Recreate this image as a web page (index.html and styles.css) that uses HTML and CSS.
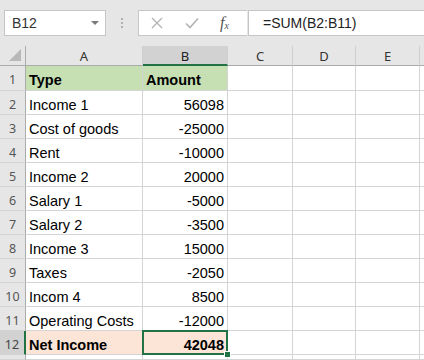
FILE: index.html
```html
<!DOCTYPE html>
<html lang="en">
<head>
    <meta charset="UTF-8">
    <title>Net Income</title>
    <link rel="stylesheet" href="styles.css">
</head>
<body>
    <!-- Barra de fórmulas -->
    <div class="toolbar">
        <div class="namebox">
            <span>B12</span>
            <span class="caret"></span>
        </div>
        <div class="grip"><i></i><i></i><i></i></div>
        <div class="fxbox">
            <svg class="btn" width="14" height="14" viewBox="0 0 14 14"><path d="M2 2L12 12M12 2L2 12" stroke="#b4b4b4" stroke-width="1.4" fill="none"/></svg>
            <svg class="btn" width="16" height="14" viewBox="0 0 16 14"><path d="M2 7.5L6 11.5L14 2.5" stroke="#b4b4b4" stroke-width="1.6" fill="none"/></svg>
            <span class="fx">f<sub>x</sub></span>
        </div>
        <div class="formula">=SUM(B2:B11)</div>
    </div>

    <!-- Hoja -->
    <div class="sheet">
        <div class="corner"><span class="tri"></span></div>
        <div class="colhead">A</div>
        <div class="colhead active">B</div>
        <div class="colhead">C</div>
        <div class="colhead">D</div>
        <div class="colhead">E</div>
        <div class="colhead last"></div>

        <div class="rowhead">1</div>
        <div class="cell head bold">Type</div>
        <div class="cell head bold">Amount</div>
        <div class="cell"></div><div class="cell"></div><div class="cell"></div><div class="cell last"></div>

        <div class="rowhead">2</div>
        <div class="cell">Income 1</div>
        <div class="cell num">56098</div>
        <div class="cell"></div><div class="cell"></div><div class="cell"></div><div class="cell last"></div>

        <div class="rowhead">3</div>
        <div class="cell">Cost of goods</div>
        <div class="cell num">-25000</div>
        <div class="cell"></div><div class="cell"></div><div class="cell"></div><div class="cell last"></div>

        <div class="rowhead">4</div>
        <div class="cell">Rent</div>
        <div class="cell num">-10000</div>
        <div class="cell"></div><div class="cell"></div><div class="cell"></div><div class="cell last"></div>

        <div class="rowhead">5</div>
        <div class="cell">Income 2</div>
        <div class="cell num">20000</div>
        <div class="cell"></div><div class="cell"></div><div class="cell"></div><div class="cell last"></div>

        <div class="rowhead">6</div>
        <div class="cell">Salary 1</div>
        <div class="cell num">-5000</div>
        <div class="cell"></div><div class="cell"></div><div class="cell"></div><div class="cell last"></div>

        <div class="rowhead">7</div>
        <div class="cell">Salary 2</div>
        <div class="cell num">-3500</div>
        <div class="cell"></div><div class="cell"></div><div class="cell"></div><div class="cell last"></div>

        <div class="rowhead">8</div>
        <div class="cell">Income 3</div>
        <div class="cell num">15000</div>
        <div class="cell"></div><div class="cell"></div><div class="cell"></div><div class="cell last"></div>

        <div class="rowhead">9</div>
        <div class="cell">Taxes</div>
        <div class="cell num">-2050</div>
        <div class="cell"></div><div class="cell"></div><div class="cell"></div><div class="cell last"></div>

        <div class="rowhead">10</div>
        <div class="cell">Incom 4</div>
        <div class="cell num">8500</div>
        <div class="cell"></div><div class="cell"></div><div class="cell"></div><div class="cell last"></div>

        <div class="rowhead">11</div>
        <div class="cell">Operating Costs</div>
        <div class="cell num">-12000</div>
        <div class="cell"></div><div class="cell"></div><div class="cell"></div><div class="cell last"></div>

        <div class="rowhead active">12</div>
        <div class="cell total bold">Net Income</div>
        <div class="cell total bold num selected">42048</div>
        <div class="cell"></div><div class="cell"></div><div class="cell"></div><div class="cell last"></div>

        <div class="rowhead"></div>
        <div class="cell"></div><div class="cell"></div><div class="cell"></div><div class="cell"></div><div class="cell"></div><div class="cell last"></div>
    </div>
</body>
</html>
```

FILE: styles.css
```css
body {
    margin: 0;
    padding: 0;
    font-family: "Liberation Sans", Arial, sans-serif;
    background-color: #fff;
    overflow: hidden;
}

/* Barra de fórmulas */
.toolbar {
    height: 46px;
    background-color: #e6e6e6;
    display: flex;
    align-items: flex-start;
    padding: 10px 0 0 4px;
    box-sizing: border-box;
}

.namebox {
    width: 102px;
    height: 26px;
    box-sizing: border-box;
    background-color: #fff;
    border: 1px solid #c6c6c6;
    display: flex;
    align-items: center;
    justify-content: space-between;
    padding: 0 6px 0 7px;
    font-size: 14px;
    color: #333;
}

.caret {
    width: 0;
    height: 0;
    border-left: 4px solid transparent;
    border-right: 4px solid transparent;
    border-top: 4px solid #7a7a7a;
}

.grip {
    width: 32px;
    height: 26px;
    display: flex;
    flex-direction: column;
    align-items: center;
    justify-content: center;
    gap: 2px;
}

.grip i {
    width: 2px;
    height: 2px;
    background-color: #b0b0b0;
}

.fxbox {
    width: 109px;
    height: 26px;
    box-sizing: border-box;
    background-color: #fff;
    border: 1px solid #c6c6c6;
    border-right: none;
    display: flex;
    align-items: center;
    padding-left: 11px;
}

.fxbox .btn {
    margin-right: 20px;
}

.fx {
    font-family: "Liberation Serif", serif;
    font-style: italic;
    font-size: 16px;
    color: #555;
    margin-left: 0;
}

.fx sub {
    font-size: 10px;
    vertical-align: -1px;
}

.formula {
    flex: 1;
    height: 26px;
    box-sizing: border-box;
    background-color: #fff;
    border: 1px solid #c6c6c6;
    border-right: none;
    margin-left: 1px;
    padding-left: 14px;
    font-size: 14px;
    line-height: 24px;
    color: #222;
}

/* Hoja */
.sheet {
    display: grid;
    grid-template-columns: 26px 117px 85px 65px 63px 64px 1fr;
    grid-template-rows: 20px 25px repeat(11, 24px) 5px;
    font-size: 14.5px;
    color: #000;
}

.corner {
    background-color: #e6e6e6;
    border-right: 1px solid #ababab;
    border-bottom: 1px solid #ababab;
    box-sizing: border-box;
    display: flex;
    align-items: flex-end;
    justify-content: flex-end;
    padding: 0 4px 4px 0;
}

.tri {
    width: 0;
    height: 0;
    border-left: 12px solid transparent;
    border-bottom: 12px solid #b8b8b8;
}

.colhead {
    background-color: #e6e6e6;
    border-right: 1px solid #cfcfcf;
    border-bottom: 1px solid #ababab;
    box-sizing: border-box;
    font-family: "Noto Sans", sans-serif;
    font-size: 13px;
    color: #333;
    text-align: center;
    line-height: 20px;
}

.colhead.active {
    background-color: #d2d2d2;
    border-bottom: 2px solid #217346;
    color: #222;
}

.colhead.last {
    border-right: none;
}

.rowhead {
    background-color: #e6e6e6;
    border-right: 1px solid #ababab;
    border-bottom: 1px solid #d4d4d4;
    box-sizing: border-box;
    font-family: "Noto Sans", sans-serif;
    font-size: 12.5px;
    color: #555;
    text-align: center;
    padding-top: 3px;
    line-height: 21px;
    overflow: hidden;
}

.rowhead.active {
    background-color: #d2d2d2;
    border-right: 2px solid #217346;
    color: #444;
}

.cell {
    border-right: 1px solid #d4d4d4;
    border-bottom: 1px solid #d4d4d4;
    box-sizing: border-box;
    padding: 3px 3px 0 3px;
    line-height: 22px;
    white-space: nowrap;
    overflow: hidden;
}

.cell.last {
    border-right: none;
}

.cell.num {
    text-align: right;
}

.bold {
    font-weight: bold;
}

.cell.head {
    background-color: #c6e0b4;
}

.cell.total {
    background-color: #fce4d6;
}

/* Celda seleccionada */
.cell.selected {
    position: relative;
    overflow: visible;
}

.cell.selected::after {
    content: "";
    position: absolute;
    left: -1px;
    top: -1px;
    right: -1px;
    bottom: -1px;
    border: 2px solid #217346;
}

.cell.selected::before {
    content: "";
    position: absolute;
    right: -4px;
    bottom: -4px;
    width: 5px;
    height: 5px;
    background-color: #217346;
    border: 1px solid #fff;
    z-index: 1;
}
```
